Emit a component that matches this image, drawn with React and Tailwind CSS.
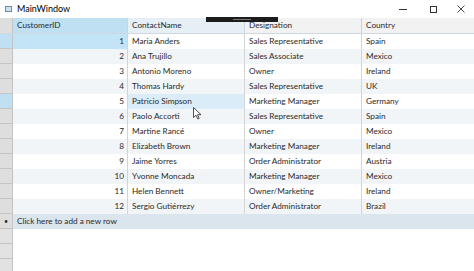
import React from "react";

const rows = [
  [1, "Maria Anders", "Sales Representative", "Spain"],
  [2, "Ana Trujillo", "Sales Associate", "Mexico"],
  [3, "Antonio Moreno", "Owner", "Ireland"],
  [4, "Thomas Hardy", "Sales Representative", "UK"],
  [5, "Patricio Simpson", "Marketing Manager", "Germany"],
  [6, "Paolo Accorti", "Sales Representative", "Spain"],
  [7, "Martine Rancé", "Owner", "Mexico"],
  [8, "Elizabeth Brown", "Marketing Manager", "Ireland"],
  [9, "Jaime Yorres", "Order Administrator", "Austria"],
  [10, "Yvonne Moncada", "Marketing Manager", "Mexico"],
  [11, "Helen Bennett", "Owner/Marketing", "Ireland"],
  [12, "Sergio Gutiérrezy", "Order Administrator", "Brazil"],
];

const cols = "grid grid-cols-[13px_115px_117px_117px_112px]";

export default function App() {
  return (
    <div
      className="relative w-[474px] h-[271px] bg-white overflow-hidden text-[8.2px] text-[#2a2a2a]"
      style={{ fontFamily: 'Lato, "Noto Sans", sans-serif' }}
    >
      {/* Title bar */}
      <div className="h-[18px] flex items-center">
        <div className="ml-[5px] w-[7px] h-[6px] border border-[#6b8aa8] bg-[#cfe0ee]" />
        <span className="ml-[5px] text-[9px] text-black">MainWindow</span>
        <div className="ml-auto flex items-center h-full">
          <div className="w-[30px] flex justify-center">
            <div className="w-[8px] h-px bg-[#333]" />
          </div>
          <div className="w-[30px] flex justify-center">
            <div className="w-[7px] h-[7px] border border-[#333]" />
          </div>
          <div className="w-[26px] flex justify-center text-[#333]">
            <svg width="8" height="8" viewBox="0 0 8 8">
              <path d="M0.5 0.5 L7.5 7.5 M7.5 0.5 L0.5 7.5" stroke="#333" strokeWidth="0.9" />
            </svg>
          </div>
        </div>
      </div>

      {/* floating dark toolbar */}
      <div className="absolute left-[206px] top-[17px] w-[72px] h-[5px] bg-[#1c1c1c] flex items-center justify-center">
        <div className="w-[18px] h-px bg-[#777]" />
      </div>

      {/* Header */}
      <div className={`${cols} h-[16px] border-b border-[#cfd8e0]`}>
        <div className="bg-[#dedede] border-r border-[#c4c4c4]" />
        <div className="bg-[#bfe0f3] border-r border-[#c8d4de] pl-[4px] flex items-center">CustomerID</div>
        <div className="bg-[#e6eff6] border-r border-[#c8d4de] pl-[4px] flex items-center">ContactName</div>
        <div className="bg-[#f2f2f2] border-r border-[#c8d4de] pl-[4px] flex items-center">Designation</div>
        <div className="bg-[#f2f2f2] pl-[4px] flex items-center">Country</div>
      </div>

      {rows.map((r, i) => {
        const alt = i % 2 === 1;
        const bg = alt ? "bg-[#f2f5f8]" : "bg-white";
        const first = i === 0;
        const hover = i === 4;
        return (
          <div key={r[0]} className={`${cols} h-[15px]`}>
            <div
              className={`${first || hover ? "bg-[#bfe0f3]" : "bg-[#dedede]"} border-r border-b border-[#c4c4c4]`}
            />
            <div
              className={`${first ? "bg-[#c3e3f6]" : bg} border-r border-[#d4d4d4] pr-[3px] flex items-center justify-end`}
            >
              {r[0]}
            </div>
            <div
              className={`${hover ? "bg-[#d9ecf8]" : bg} border-r border-[#d4d4d4] pl-[4px] flex items-center`}
            >
              {r[1]}
            </div>
            <div className={`${bg} border-r border-[#d4d4d4] pl-[4px] flex items-center`}>{r[2]}</div>
            <div className={`${bg} pl-[4px] flex items-center`}>{r[3]}</div>
          </div>
        );
      })}

      {/* Add new row */}
      <div className="flex h-[15px]">
        <div className="w-[13px] bg-[#dedede] border-r border-b border-[#c4c4c4] flex items-center justify-center text-[7px]">
          •
        </div>
        <div className="flex-1 bg-[#dbe5ee] pl-[4px] flex items-center">Click here to add a new row</div>
      </div>

      {/* Empty gutter */}
      <div className="flex">
        <div className="w-[13px] h-[44px] bg-[#e2e2e2] border-r border-[#c4c4c4] flex flex-col">
          <div className="h-[15px] border-b border-[#c4c4c4]" />
          <div className="h-[15px] border-b border-[#c4c4c4]" />
        </div>
      </div>

      {/* mouse cursor */}
      <svg className="absolute left-[193px] top-[107px]" width="9" height="13" viewBox="0 0 9 13">
        <path d="M0.5 0.5 L0.5 10.5 L3 8.2 L4.8 12 L6.2 11.4 L4.5 7.7 L8 7.7 Z" fill="white" stroke="#222" strokeWidth="0.8" />
      </svg>
    </div>
  );
}
